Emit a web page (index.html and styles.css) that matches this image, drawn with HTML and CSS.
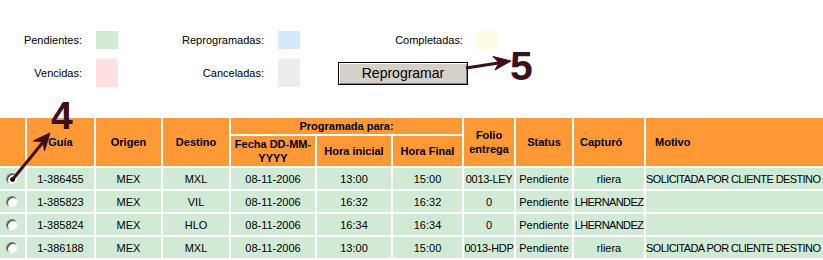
FILE: index.html
```
<!DOCTYPE html>
<html lang="es">
<head>
<meta charset="utf-8">
<title>Reprogramar</title>
<link rel="stylesheet" href="styles.css">
</head>
<body>
<div class="page">
  <div class="legend">
    <span class="lbl">Pendientes:</span><span class="sw sw-pend"></span>
    <span class="lbl">Reprogramadas:</span><span class="sw sw-repro"></span>
    <span class="lbl">Completadas:</span><span class="sw sw-comp"></span>
    <span class="lbl">Vencidas:</span><span class="sw sw-venc"></span>
    <span class="lbl">Canceladas:</span><span class="sw sw-canc"></span>
    <div class="btn-cell"><button class="btn" type="button">Reprogramar</button></div>
  </div>

  <table class="grid">
    <colgroup>
      <col class="c-radio"><col class="c-guia"><col class="c-orig"><col class="c-dest">
      <col class="c-fecha"><col class="c-hini"><col class="c-hfin"><col class="c-folio">
      <col class="c-status"><col class="c-capt"><col class="c-motivo">
    </colgroup>
    <thead>
      <tr class="h1">
        <th rowspan="2"></th>
        <th rowspan="2">Guía</th>
        <th rowspan="2">Origen</th>
        <th rowspan="2">Destino</th>
        <th colspan="3">Programada para:</th>
        <th rowspan="2">Folio<br>entrega</th>
        <th rowspan="2">Status</th>
        <th rowspan="2" class="left capt">Capturó</th>
        <th rowspan="2" class="left motivo">Motivo</th>
      </tr>
      <tr class="h2">
        <th>Fecha DD-MM-<br>YYYY</th>
        <th>Hora inicial</th>
        <th>Hora Final</th>
      </tr>
    </thead>
    <tbody>
      <tr>
        <td><input class="radio" type="radio" name="sel" checked></td>
        <td>1-386455</td><td>MEX</td><td>MXL</td><td>08-11-2006</td><td>13:00</td><td>15:00</td>
        <td class="tight">0013-LEY</td><td>Pendiente</td><td>rliera</td><td class="left caps">SOLICITADA POR CLIENTE DESTINO</td>
      </tr>
      <tr>
        <td><input class="radio" type="radio" name="sel"></td>
        <td>1-385823</td><td>MEX</td><td>VIL</td><td>08-11-2006</td><td>16:32</td><td>16:32</td>
        <td>0</td><td>Pendiente</td><td class="caps">LHERNANDEZ</td><td class="left"></td>
      </tr>
      <tr>
        <td><input class="radio" type="radio" name="sel"></td>
        <td>1-385824</td><td>MEX</td><td>HLO</td><td>08-11-2006</td><td>16:34</td><td>16:34</td>
        <td>0</td><td>Pendiente</td><td class="caps">LHERNANDEZ</td><td class="left"></td>
      </tr>
      <tr>
        <td><input class="radio" type="radio" name="sel"></td>
        <td>1-386188</td><td>MEX</td><td>MXL</td><td>08-11-2006</td><td>13:00</td><td>15:00</td>
        <td class="tight">0013-HDP</td><td>Pendiente</td><td>rliera</td><td class="left caps">SOLICITADA POR CLIENTE DESTINO</td>
      </tr>
    </tbody>
  </table>

  <svg class="annot" width="823" height="260" viewBox="0 0 823 260" xmlns="http://www.w3.org/2000/svg">
    <g fill="#3d0f1c" stroke="#3d0f1c">
      <line x1="466" y1="68" x2="500" y2="62.8" stroke-width="3"/>
      <polygon points="511,61 493,56.5 499,62.7 495,70" stroke-width="1"/>
      <line x1="13" y1="179" x2="44" y2="141" stroke-width="3"/>
      <polygon points="50,133 44.5,151 43,141.6 33,141" stroke-width="1"/>
      <text x="510" y="80" class="num" stroke="none">5</text>
      <text x="51" y="129" class="num num4" stroke="none">4</text>
    </g>
  </svg>
</div>
</body>
</html>
```

FILE: styles.css
```
html, body {
  margin: 0;
  padding: 0;
  background: #ffffff;
  overflow: hidden;
}

body {
  font-family: "Liberation Sans", Arial, sans-serif;
  font-size: 11px;
  color: #000;
}

.page {
  position: relative;
  width: 823px;
  height: 260px;
  overflow: hidden;
}

/* Legend */
.legend {
  display: grid;
  grid-template-columns: 82px 36px 146px 36px 163px 34px;
  grid-template-rows: 18px 28px;
  row-gap: 10px;
  padding-top: 31px;
}

.lbl {
  display: flex;
  align-items: center;
  justify-content: flex-end;
  font-size: 11px;
  white-space: nowrap;
}

.sw {
  justify-self: end;
  width: 22px;
}

.sw-comp { width: 21px; }

.sw-pend { background: #d1ead5; }
.sw-repro { background: #d4e8fb; }
.sw-comp { background: #fffde1; }
.sw-venc { background: #fde0e0; }
.sw-canc { background: #ececec; }

.btn-cell {
  grid-column: 5 / 7;
  display: flex;
  align-items: center;
  padding-left: 38px;
}

.btn {
  width: 130px;
  height: 23px;
  margin: 0;
  padding: 0;
  background: #d4d0c8;
  border: 1px solid #000;
  box-shadow: inset 1px 1px 0 #ffffff, inset -1px -1px 0 #808080;
  font-family: "Liberation Sans", Arial, sans-serif;
  font-size: 14px;
  color: #000;
  line-height: 20px;
}

/* Table */
.grid {
  table-layout: fixed;
  border-collapse: separate;
  border-spacing: 2px;
  margin: 29px 0 0 -2px;
  width: 830px;
}

.c-radio { width: 25px; }
.c-guia { width: 67px; }
.c-orig { width: 65px; }
.c-dest { width: 66px; }
.c-fecha { width: 84px; }
.c-hini { width: 74px; }
.c-hfin { width: 69px; }
.c-folio { width: 50px; }
.c-status { width: 56px; }
.c-capt { width: 70px; }
.c-motivo { width: 184px; }

.grid th {
  background: #fe9935;
  font-weight: bold;
  font-size: 11px;
  line-height: 14px;
  padding: 0;
  text-align: center;
  vertical-align: middle;
}

.grid .h1 th { height: 16px; }
.grid .h2 th { height: 30px; }

.grid th.capt { padding-left: 6px; }
.grid th.motivo { padding-left: 9px; }

.grid td {
  background: #d1ead5;
  height: 21px;
  padding: 0;
  text-align: center;
  vertical-align: middle;
  white-space: nowrap;
  overflow: hidden;
  font-size: 11px;
}

.grid td.left,
.grid th.left {
  text-align: left;
}

.grid td.caps { letter-spacing: -0.6px; }
.grid td.tight { letter-spacing: -0.3px; }

.radio {
  -webkit-appearance: none;
  appearance: none;
  box-sizing: border-box;
  width: 12px;
  height: 12px;
  margin: 0 0 0 6px;
  padding: 0;
  display: block;
  border-radius: 50%;
  border: 1px solid;
  border-color: #808080 #e4e4e4 #e4e4e4 #808080;
  box-shadow: inset 1px 1px 0 #404040;
  background: #ffffff;
}

.radio:checked {
  background: radial-gradient(circle at 55% 55%, #000 0 2px, #fff 2.6px);
}

/* Annotation overlay */
.annot {
  position: absolute;
  left: 0;
  top: 0;
  pointer-events: none;
}

.num {
  font-family: "Liberation Sans", Arial, sans-serif;
  font-weight: bold;
  font-size: 41px;
}

.num4 {
  font-size: 39px;
}
```
